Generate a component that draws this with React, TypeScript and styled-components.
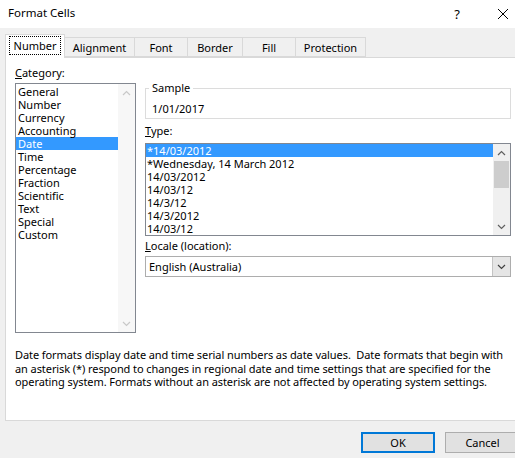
import { createGlobalStyle, styled } from 'styled-components';

const GlobalStyle = createGlobalStyle`
  html, body {
    margin: 0;
    padding: 0;
    overflow: hidden;
    background: #f0f0f0;
  }
  body {
    font-family: 'Noto Sans', 'Open Sans', sans-serif;
    font-size: 11px;
    color: #000;
  }
`;

const Window = styled.div`
  width: 526px;
  height: 458px;
  display: flex;
  flex-direction: column;
  background: #f0f0f0;
`;

const TitleBar = styled.div`
  height: 28px;
  display: flex;
  align-items: center;
  padding-left: 8px;
  background: #fff;
`;

const Title = styled.span`
  flex: 1;
  margin-top: -3px;
  font-size: 11.5px;
`;

const TitleButton = styled.div`
  width: 46px;
  height: 28px;
  display: flex;
  align-items: center;
  justify-content: center;
  font-size: 13px;
`;

const TabStrip = styled.div`
  height: 29px;
  display: flex;
  align-items: flex-end;
  padding-left: 5px;
  position: relative;
  z-index: 1;
`;

const Tab = styled.div<{ $w: number; $active?: boolean }>`
  width: ${({ $w }) => $w}px;
  height: ${({ $active }) => ($active ? 24 : 20)}px;
  box-sizing: border-box;
  display: flex;
  align-items: center;
  justify-content: center;
  border: 1px solid #d9d9d9;
  border-left-width: ${({ $active }) => ($active ? 1 : 0)}px;
  border-bottom: ${({ $active }) => ($active ? 'none' : '1px solid #d9d9d9')};
  background: ${({ $active }) => ($active ? '#fff' : '#f0f0f0')};
  margin-bottom: ${({ $active }) => ($active ? -1 : 0)}px;
  padding-bottom: ${({ $active }) => ($active ? 2 : 0)}px;
`;

const FocusLabel = styled.span`
  outline: 1px dotted #000;
  outline-offset: 1px;
  padding: 0 3px;
  line-height: 15px;
`;

const Panel = styled.div`
  margin: 0 5px;
  height: 364px;
  box-sizing: border-box;
  background: #fff;
  border: 1px solid #d9d9d9;
  padding: 8px 9px 0 9px;
`;

const Columns = styled.div`
  display: flex;
  gap: 9px;
`;

const Column = styled.div<{ $w: number }>`
  width: ${({ $w }) => $w}px;
  display: flex;
  flex-direction: column;
`;

const Label = styled.div<{ $mt?: number }>`
  line-height: 14px;
  margin-top: ${({ $mt }) => $mt ?? 0}px;
`;

const ListBox = styled.div<{ $h: number; $mt: number }>`
  height: ${({ $h }) => $h}px;
  margin-top: ${({ $mt }) => $mt}px;
  box-sizing: border-box;
  border: 1px solid #828790;
  display: flex;
  overflow: hidden;
`;

const Items = styled.div<{ $pt?: number }>`
  flex: 1;
  padding-top: ${({ $pt }) => $pt ?? 0}px;
  overflow: hidden;
`;

const Item = styled.div<{ $selected?: boolean; $pl?: number }>`
  height: 13px;
  line-height: 13px;
  padding-left: ${({ $pl }) => $pl ?? 2}px;
  white-space: nowrap;
  background: ${({ $selected }) => ($selected ? '#3399ff' : 'transparent')};
  color: ${({ $selected }) => ($selected ? '#fff' : '#000')};
`;

const ScrollBar = styled.div<{ $light?: boolean }>`
  width: 17px;
  display: flex;
  flex-direction: column;
  background: ${({ $light }) => ($light ? '#f7f7f7' : '#f0f0f0')};
`;

const ArrowButton = styled.div`
  height: 17px;
  display: flex;
  align-items: center;
  justify-content: center;
`;

const Track = styled.div`
  flex: 1;
  display: flex;
  flex-direction: column;
  padding: 0 1px;
`;

const Thumb = styled.div`
  height: 27px;
  background: #cdcdcd;
`;

const GroupBox = styled.fieldset`
  margin: 15px 0 0;
  padding: 7px 6px 2px;
  border: 1px solid #dcdcdc;
  min-width: 0;
  line-height: 14px;
`;

const Legend = styled.legend`
  padding: 0 3px;
  margin-left: -3px;
  line-height: 14px;
`;

const Select = styled.div`
  height: 21px;
  margin-top: 3px;
  box-sizing: border-box;
  border: 1px solid #adadad;
  display: flex;
  align-items: center;
`;

const SelectValue = styled.span`
  flex: 1;
  padding-left: 3px;
`;

const SelectButton = styled.div`
  width: 17px;
  height: 19px;
  display: flex;
  align-items: center;
  justify-content: center;
  background: #e5e5e5;
  border-left: 1px solid #c4c4c4;
`;

const Description = styled.p`
  margin: 15px 0 0;
  line-height: 13.5px;
  letter-spacing: -0.08px;
  white-space: nowrap;
`;

const ButtonRow = styled.div`
  display: flex;
  justify-content: flex-end;
  gap: 10px;
  padding: 11px 6px 0 0;
`;

const Button = styled.div<{ $default?: boolean }>`
  width: ${({ $default }) => ($default ? 74 : 75)}px;
  height: 21px;
  box-sizing: border-box;
  display: flex;
  align-items: center;
  justify-content: center;
  background: #e1e1e1;
  border: ${({ $default }) => ($default ? '2px solid #0078d7' : '1px solid #adadad')};
`;

const Chevron = ({ up, color }: { up?: boolean; color: string }) => (
  <svg width='9' height='6' viewBox='0 0 9 6'>
    <path d={up ? 'M1 5 L4.5 1.5 L8 5' : 'M1 1 L4.5 4.5 L8 1'} fill='none' stroke={color} strokeWidth='1.2' />
  </svg>
);

const categories = [
  'General',
  'Number',
  'Currency',
  'Accounting',
  'Date',
  'Time',
  'Percentage',
  'Fraction',
  'Scientific',
  'Text',
  'Special',
  'Custom',
];

const types = ['*14/03/2012', '*Wednesday, 14 March 2012', '14/03/2012', '14/03/12', '14/3/12', '14/3/2012', '14/03/12'];

const tabs = [
  { name: 'Alignment', w: 70 },
  { name: 'Font', w: 53 },
  { name: 'Border', w: 55 },
  { name: 'Fill', w: 53 },
  { name: 'Protection', w: 70 },
];

const App = () => (
  <>
    <GlobalStyle />
    <Window>
      <TitleBar>
        <Title>Format Cells</Title>
        <TitleButton>?</TitleButton>
        <TitleButton>
          <svg width='12' height='12' viewBox='0 0 12 12'>
            <path d='M1 1 L11 11 M11 1 L1 11' stroke='#000' strokeWidth='1' />
          </svg>
        </TitleButton>
      </TitleBar>

      <TabStrip>
        <Tab $w={60} $active>
          <FocusLabel>Number</FocusLabel>
        </Tab>
        {tabs.map((t) => (
          <Tab key={t.name} $w={t.w}>
            {t.name}
          </Tab>
        ))}
      </TabStrip>

      <Panel>
        <Columns>
          <Column $w={121}>
            <Label>
              <u>C</u>ategory:
            </Label>
            <ListBox $h={250} $mt={3}>
              <Items $pt={1}>
                {categories.map((c) => (
                  <Item key={c} $selected={c === 'Date'}>
                    {c}
                  </Item>
                ))}
              </Items>
              <ScrollBar $light>
                <ArrowButton>
                  <Chevron up color='#c8c8c8' />
                </ArrowButton>
                <Track />
                <ArrowButton>
                  <Chevron color='#c8c8c8' />
                </ArrowButton>
              </ScrollBar>
            </ListBox>
          </Column>

          <Column $w={366}>
            <GroupBox>
              <Legend>Sample</Legend>
              1/01/2017
            </GroupBox>
            <Label $mt={5}>
              <u>T</u>ype:
            </Label>
            <ListBox $h={93} $mt={5}>
              <Items>
                {types.map((t, i) => (
                  <Item key={i} $pl={1} $selected={i === 0}>
                    {t}
                  </Item>
                ))}
              </Items>
              <ScrollBar>
                <ArrowButton>
                  <Chevron up color='#606060' />
                </ArrowButton>
                <Track>
                  <Thumb />
                </Track>
                <ArrowButton>
                  <Chevron color='#606060' />
                </ArrowButton>
              </ScrollBar>
            </ListBox>
            <Label $mt={3}>
              <u>L</u>ocale (location):
            </Label>
            <Select>
              <SelectValue>English (Australia)</SelectValue>
              <SelectButton>
                <Chevron color='#404040' />
              </SelectButton>
            </Select>
          </Column>
        </Columns>

        <Description>
          Date formats display date and time serial numbers as date values.&nbsp; Date formats that begin with
          <br />
          an asterisk (*) respond to changes in regional date and time settings that are specified for the
          <br />
          operating system. Formats without an asterisk are not affected by operating system settings.
        </Description>
      </Panel>

      <ButtonRow>
        <Button $default>OK</Button>
        <Button>Cancel</Button>
      </ButtonRow>
    </Window>
  </>
);

export default App;
